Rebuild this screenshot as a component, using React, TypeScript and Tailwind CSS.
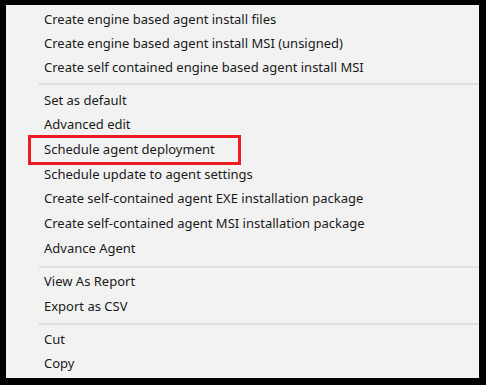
import type { ReactNode } from 'react';

function Item({ children, h = 'h-[24.7px]' }: { children: ReactNode; h?: string }) {
  return (
    <div className={`${h} flex items-center pl-[38px] text-[13px] text-[#1a1a1a] whitespace-nowrap`}>
      {children}
    </div>
  );
}

function Separator({ className }: { className: string }) {
  return (
    <div className={`pl-[33px] ${className}`}>
      <div className="h-[2px] bg-[#e0e0e0]" />
    </div>
  );
}

export default function App() {
  return (
    <div
      className="w-[486px] h-[385px] bg-black pt-[5px] pl-[6px] pr-[7px] pb-[7px]"
      style={{ fontFamily: '"Noto Sans", "Open Sans", sans-serif' }}
    >
      <div className="h-full bg-[#f2f2f2] pt-[3px]">
        <Item h="h-[24px]">Create engine based agent install files</Item>
        <Item h="h-[24px]">Create engine based agent install MSI (unsigned)</Item>
        <Item h="h-[24px]">Create self contained engine based agent install MSI</Item>
        <Separator className="pt-[2.5px] pb-[3.5px]" />
        <Item>Set as default</Item>
        <Item>Advanced edit</Item>
        <div className="relative">
          <Item>Schedule agent deployment</Item>
          {/* highlight box drawn over the item */}
          <div className="absolute left-[22px] top-[-2px] w-[213px] h-[30px] border-[3px] border-[#ec1c24]" />
        </div>
        <Item>Schedule update to agent settings</Item>
        <Item>Create self-contained agent EXE installation package</Item>
        <Item>Create self-contained agent MSI installation package</Item>
        <Item>Advance Agent</Item>
        <Separator className="pt-[5px] pb-[2px]" />
        <Item>View As Report</Item>
        <Item>Export as CSV</Item>
        <Separator className="pt-[4px] pb-[2px]" />
        <Item>Cut</Item>
        <Item>Copy</Item>
      </div>
    </div>
  );
}
